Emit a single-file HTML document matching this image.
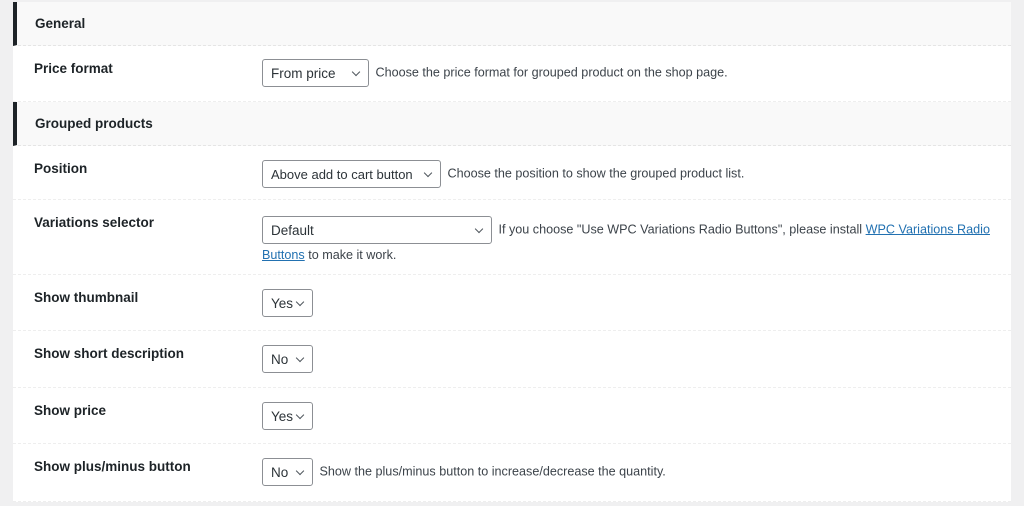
<!DOCTYPE html><html><head><style>
body{margin:0;background:#f0f0f1;font-family:"Liberation Sans",sans-serif;font-size:13px;color:#3c434a;width:1024px;height:506px;overflow:hidden;position:relative}
.p{position:absolute;left:13px;top:2px;width:998px;background:#fff}
.h{height:44px;background:#f9f9f9;border-left:4px solid #1d2327;border-bottom:1px dashed #e5e5e5;box-sizing:border-box;font-weight:bold;color:#1d2327;font-size:13.5px;padding:14px 0 0 18px}
.r{position:relative;border-bottom:1px dashed #eee;box-sizing:border-box}
.l{position:absolute;left:21px;top:15px;font-weight:bold;color:#1d2327;font-size:13.5px}
.c{position:absolute;left:249px;top:14px;right:16px;line-height:22px;font-size:12.6px}
.s{display:inline-block;white-space:nowrap;vertical-align:middle;height:28px;box-sizing:border-box;border:1px solid #8c8f94;border-radius:3px;padding:0 20px 0 8px;line-height:28px;font-size:13.5px;color:#2c3338;position:relative;margin-right:3px}
.s:after{content:"";position:absolute;right:9px;top:9px;width:5px;height:5px;border-right:1.8px solid #50575e;border-bottom:1.8px solid #50575e;transform:rotate(45deg)}
a{color:#2271b1}
</style></head><body>
<div class="p">
<div class="h">General</div>
<div class="r" style="height:56px"><div class="l">Price format</div><div class="c" style="top:13px"><span class="s" style="width:107px">From price</span> Choose the price format for grouped product on the shop page.</div></div>
<div class="h">Grouped products</div>
<div class="r" style="height:54px"><div class="l">Position</div><div class="c"><span class="s" style="width:179px;font-size:13px">Above add to cart button</span> Choose the position to show the grouped product list.</div></div>
<div class="r" style="height:75px"><div class="l">Variations selector</div><div class="c" style="top:16px"><span class="s" style="width:230px">Default</span> If you choose "Use WPC Variations Radio Buttons", please install <a href="#">WPC Variations Radio Buttons</a> to make it work.</div></div>
<div class="r" style="height:56px"><div class="l">Show thumbnail</div><div class="c"><span class="s" style="width:51px">Yes</span></div></div>
<div class="r" style="height:57px"><div class="l">Show short description</div><div class="c"><span class="s" style="width:51px">No</span></div></div>
<div class="r" style="height:56px"><div class="l">Show price</div><div class="c"><span class="s" style="width:51px">Yes</span></div></div>
<div class="r" style="height:58px"><div class="l">Show plus/minus button</div><div class="c"><span class="s" style="width:51px">No</span> Show the plus/minus button to increase/decrease the quantity.</div></div>
</div>
</body></html>
